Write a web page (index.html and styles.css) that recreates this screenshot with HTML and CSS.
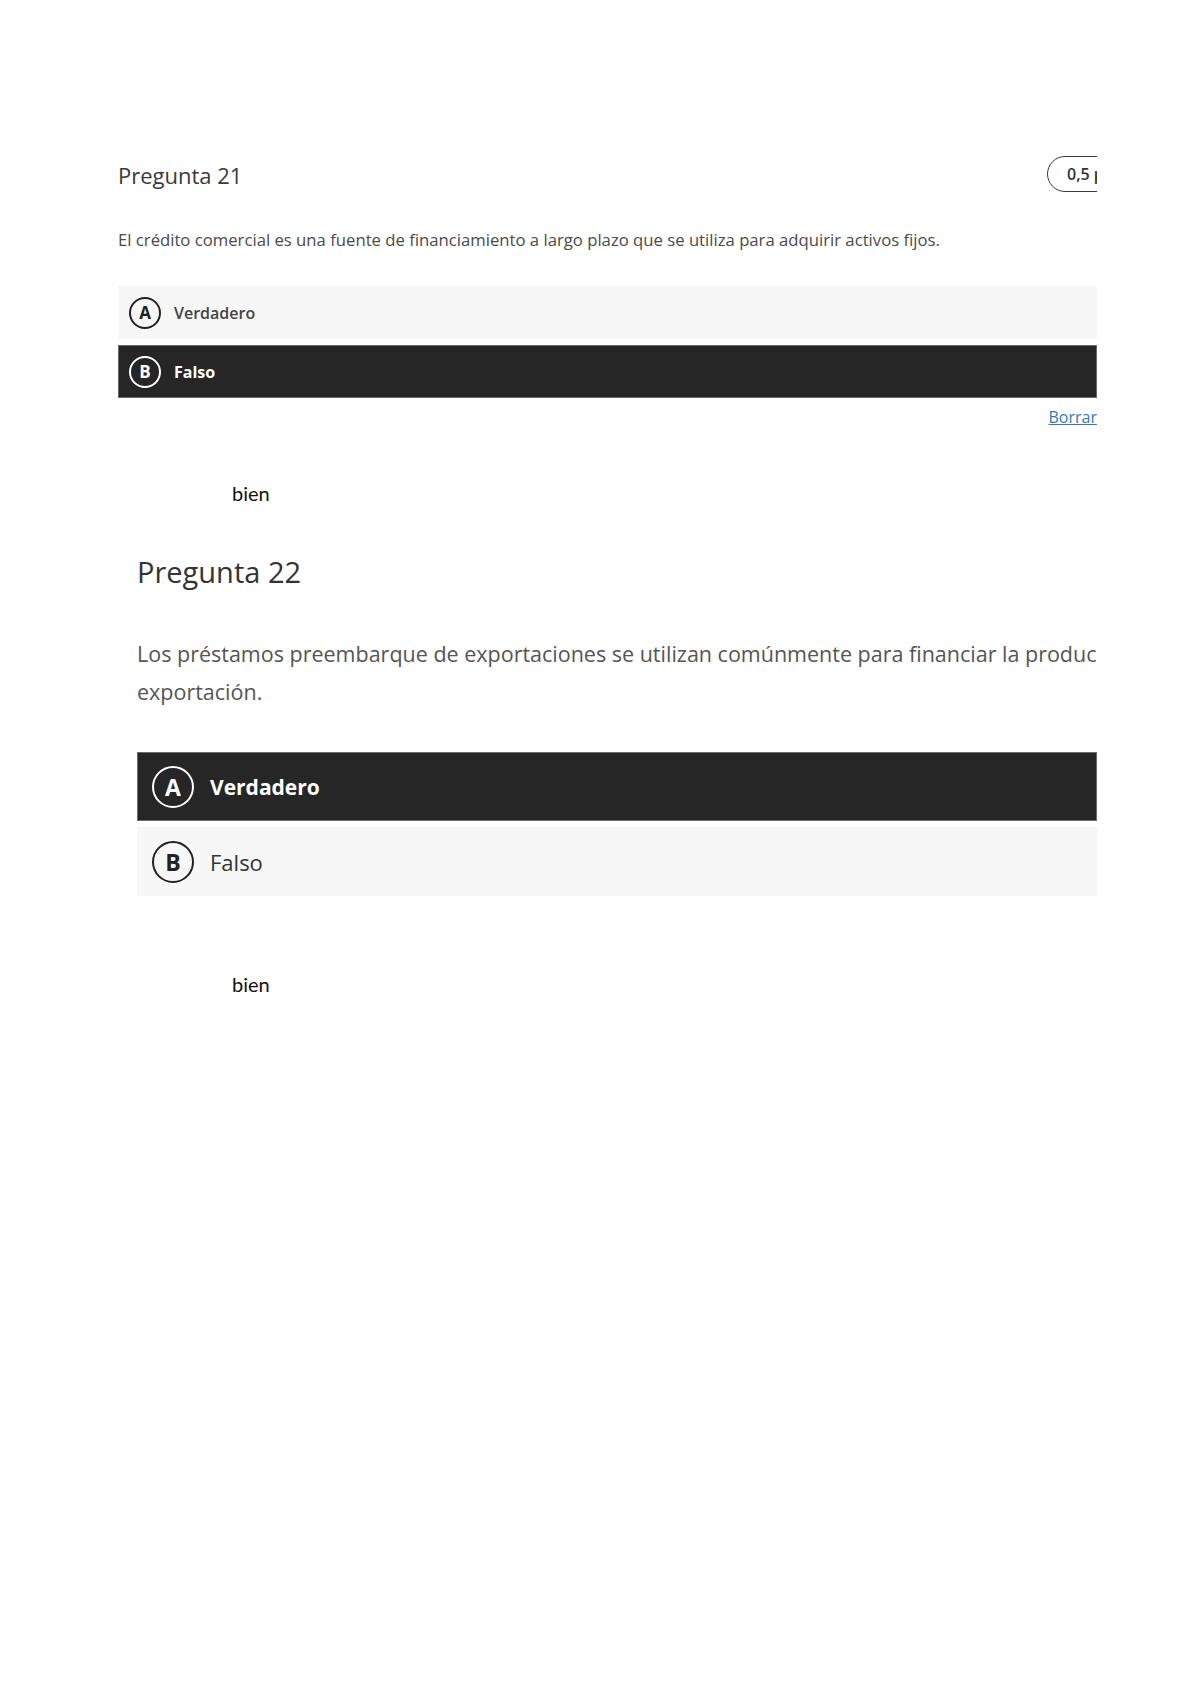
FILE: index.html
```html
<!DOCTYPE html>
<html lang="es">
<head>
<meta charset="utf-8">
<title>Preguntas</title>
<link rel="stylesheet" href="styles.css">
</head>
<body>
<main class="page">
  <section class="q21">
    <div class="q21-head">
      <h2 class="q21-title">Pregunta 21</h2>
      <span class="badge">0,5 pts</span>
    </div>
    <p class="q21-text">El crédito comercial es una fuente de financiamiento a largo plazo que se utiliza para adquirir activos fijos.</p>
    <div class="q21-options">
      <div class="opt opt-sm opt-light">
        <span class="circle circle-sm">A</span>
        <span class="opt-label opt-label-sm-light">Verdadero</span>
      </div>
      <div class="opt opt-sm opt-dark">
        <span class="circle circle-sm">B</span>
        <span class="opt-label opt-label-sm-dark">Falso</span>
      </div>
    </div>
    <div class="clear-row"><a class="clear-link" href="#">Borrar</a></div>
  </section>

  <p class="note note-1">bien</p>

  <section class="q22">
    <h2 class="q22-title">Pregunta 22</h2>
    <p class="q22-text">Los préstamos preembarque de exportaciones se utilizan comúnmente para financiar la producción de bienes para la<br>exportación.</p>
    <div class="q22-options">
      <div class="opt opt-lg opt-dark">
        <span class="circle circle-lg">A</span>
        <span class="opt-label opt-label-lg-dark">Verdadero</span>
      </div>
      <div class="opt opt-lg opt-light">
        <span class="circle circle-lg">B</span>
        <span class="opt-label opt-label-lg-light">Falso</span>
      </div>
    </div>
  </section>

  <p class="note note-2">bien</p>
</main>
</body>
</html>
```

FILE: styles.css
```css
* {
  box-sizing: border-box;
}

html, body {
  margin: 0;
  padding: 0;
  background: #ffffff;
}

body {
  font-family: "Open Sans", "Noto Sans", sans-serif;
  color: #333333;
}

.page {
  padding-top: 156px;
  padding-bottom: 200px;
  min-height: 1696px;
}

/* ---------- Question 21 ---------- */
.q21 {
  margin-left: 118px;
  width: 979px;
  overflow: hidden;
}

.q21-head {
  display: grid;
  grid-template-columns: 929px auto;
  align-items: center;
  width: 1060px;
  height: 36px;
}

.q21-title {
  margin: 0;
  padding-top: 2px;
  font-size: 22px;
  font-weight: 400;
  color: #3a3a3a;
  line-height: 30px;
}

.badge {
  display: inline-flex;
  align-items: center;
  height: 36px;
  padding: 0 18px 0 19px;
  border: 1.5px solid #3a3a3a;
  border-radius: 18px;
  font-size: 16px;
  font-weight: 600;
  color: #333333;
  white-space: nowrap;
}

.q21-text {
  margin: 37px 0 0;
  font-size: 16.7px;
  line-height: 22px;
  color: #4a4a4a;
  white-space: nowrap;
}

.q21-options {
  margin-top: 35px;
  display: flex;
  flex-direction: column;
  gap: 6px;
}

/* ---------- Options ---------- */
.opt {
  display: flex;
  align-items: center;
  width: 100%;
}

.opt-light {
  background: #f7f7f7;
  color: #333333;
}

.opt-dark {
  background: #262626;
  color: #ffffff;
  box-shadow: inset 0 0 0 1px #6a6a6a;
}

.opt-sm {
  height: 53px;
  padding-left: 11px;
  gap: 13px;
}

.opt-lg {
  height: 69px;
  padding-left: 15px;
  gap: 16px;
}

.circle {
  display: inline-flex;
  align-items: center;
  justify-content: center;
  border-radius: 50%;
  border-style: solid;
  border-color: currentColor;
  font-weight: 700;
  flex-shrink: 0;
}

.opt-light .circle {
  color: #222222;
}

.opt-dark .circle {
  color: #ffffff;
}

.circle-sm {
  width: 32px;
  height: 32px;
  border-width: 2px;
  font-size: 17px;
}

.circle-lg {
  width: 42px;
  height: 42px;
  border-width: 2.5px;
  font-size: 23px;
}

.opt-label-sm-light {
  font-size: 16px;
  font-weight: 600;
  color: #444444;
}

.opt-label-sm-dark {
  font-size: 16px;
  font-weight: 700;
  color: #ffffff;
}

.opt-label-lg-dark {
  font-size: 21px;
  font-weight: 700;
  color: #ffffff;
}

.opt-label-lg-light {
  font-size: 22px;
  font-weight: 400;
  color: #333333;
}

.clear-row {
  margin-top: 8px;
  display: flex;
  justify-content: flex-end;
}

.clear-link {
  font-size: 16px;
  line-height: 22px;
  color: #2f7cb6;
  text-decoration: underline;
}

/* ---------- Notes ---------- */
.note {
  margin: 0;
  margin-left: 232px;
  font-family: Lato, "Liberation Sans", sans-serif;
  font-size: 20px;
  line-height: 24px;
  color: #111111;
}

.note-1 {
  margin-top: 53px;
}

.note-2 {
  margin-top: 76px;
}

/* ---------- Question 22 ---------- */
.q22 {
  margin-top: 47px;
  margin-left: 137px;
  width: 960px;
  overflow: hidden;
}

.q22-title {
  margin: 0;
  font-size: 29px;
  font-weight: 400;
  line-height: 40px;
  color: #333333;
}

.q22-text {
  margin: 43px 0 0;
  font-size: 21.5px;
  line-height: 38px;
  color: #555555;
  white-space: nowrap;
}

.q22-options {
  margin-top: 41px;
  display: flex;
  flex-direction: column;
  gap: 6px;
}
```
